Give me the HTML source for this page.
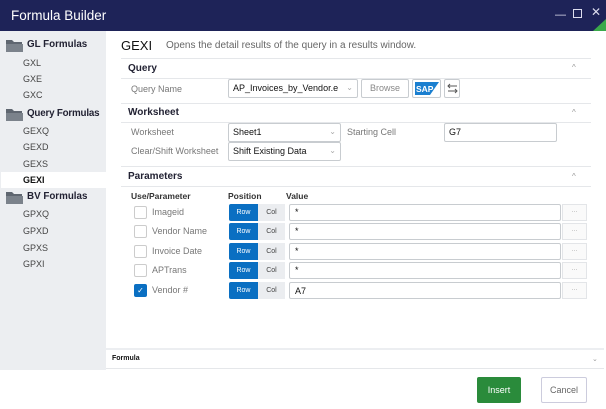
<!DOCTYPE html>
<html><head><style>
*{box-sizing:border-box;margin:0;padding:0}
body{width:606px;height:409px;overflow:hidden;font-family:"Liberation Sans",sans-serif;background:#fff;position:relative;font-size:9px;color:#333}
.a{position:absolute}
.title{left:0;top:0;width:606px;height:31px;background:#1e2358;color:#fff;font-size:13.5px;padding:8px 0 0 11px}
.side{left:0;top:31px;width:106px;height:339px;background:#eceef1}
.grp{font-weight:bold;font-size:9.8px;color:#223;white-space:nowrap}
.it{font-size:9px;color:#444}
.main{left:106px;top:31px;width:498px;height:319px;background:#fff}
.sh{font-size:10px;font-weight:bold;color:#223}
.ln{height:1px;background:#e5e7ea}
.lb{color:#777;font-size:9px}
.inp{border:1px solid #c8ccd0;border-radius:2px;background:#fff;font-size:9px;color:#111;padding:3px 4px}
.car{color:#aaa;font-size:8px}
.cb{width:13px;height:13px;border:1px solid #ccc;border-radius:2px;background:#fff}
.row{background:#0a6fc2;color:#fff;font-size:7px;text-align:center;line-height:17px;width:29px;height:17px;border-radius:2px 0 0 2px}
.col{background:#ebedf0;color:#444;font-size:7px;text-align:center;line-height:17px;width:27px;height:17px}
.dot{border:1px solid #e3e5e8;background:#fafafa;width:25px;height:17px;color:#aaa;font-size:7px;text-align:center;padding-top:2px}
.chev{color:#999;font-size:8px}
</style></head><body>
<div class="a title">Formula Builder</div>
<div class="a" style="left:555px;top:9px;color:#dde;font-size:11px">&#8212;</div>
<div class="a" style="left:573px;top:9px;width:9px;height:9px;border:1px solid #dde"></div>
<div class="a" style="left:591px;top:5px;color:#dde;font-size:12px">✕</div>
<div class="a" style="left:593px;top:19px;width:0;height:0;border-left:13px solid transparent;border-bottom:12px solid #3aa94a"></div>
<div class="a side"></div>
<svg class="a" style="left:6px;top:39px" width="17" height="13"><path d="M0 1h6l2 2h8v10H0z" fill="#5f6670"/><path d="M0 5h17v8H0z" fill="#7b828b"/></svg>
<div class="a grp" style="left:27px;top:39px">GL Formulas</div>
<div class="a it" style="left:23px;top:58px">GXL</div>
<div class="a it" style="left:23px;top:74px">GXE</div>
<div class="a it" style="left:23px;top:90px">GXC</div>
<svg class="a" style="left:6px;top:108px" width="17" height="13"><path d="M0 1h6l2 2h8v10H0z" fill="#5f6670"/><path d="M0 5h17v8H0z" fill="#7b828b"/></svg>
<div class="a grp" style="left:27px;top:108px;letter-spacing:-0.2px">Query Formulas</div>
<div class="a it" style="left:23px;top:126px">GEXQ</div>
<div class="a it" style="left:23px;top:142px">GEXD</div>
<div class="a it" style="left:23px;top:159px">GEXS</div>
<div class="a" style="left:1px;top:172px;width:105px;height:16px;background:#fff"></div>
<div class="a it" style="left:23px;top:175px;color:#111;font-weight:bold">GEXI</div>
<svg class="a" style="left:6px;top:191px" width="17" height="13"><path d="M0 1h6l2 2h8v10H0z" fill="#5f6670"/><path d="M0 5h17v8H0z" fill="#7b828b"/></svg>
<div class="a grp" style="left:27px;top:191px">BV Formulas</div>
<div class="a it" style="left:23px;top:209px">GPXQ</div>
<div class="a it" style="left:23px;top:226px">GPXD</div>
<div class="a it" style="left:23px;top:243px">GPXS</div>
<div class="a it" style="left:23px;top:259px">GPXI</div>

<div class="a main"></div>
<div class="a" style="left:121px;top:38px;font-size:13px;color:#111">GEXI</div>
<div class="a" style="left:166px;top:40px;font-size:10px;color:#666">Opens the detail results of the query in a results window.</div>
<div class="a ln" style="left:121px;top:58px;width:470px"></div>
<div class="a sh" style="left:128px;top:63px">Query</div>
<div class="a chev" style="left:572px;top:63px">^</div>
<div class="a ln" style="left:121px;top:78px;width:470px"></div>
<div class="a lb" style="left:131px;top:84px">Query Name</div>
<div class="a inp" style="left:228px;top:79px;width:130px;height:19px">AP_Invoices_by_Vendor.e<span class="car" style="float:right">⌄</span></div>
<div class="a inp" style="left:361px;top:79px;width:48px;height:19px;color:#888;text-align:center">Browse</div>
<div class="a inp" style="left:412px;top:79px;width:29px;height:19px;padding:2px"><svg width="24" height="13"><path d="M0 0h24l-9 13H0z" fill="#1a7fd0"/><text x="1" y="10" fill="#fff" font-size="8.5" font-weight="bold" font-family="Liberation Sans">SAP</text></svg></div>
<div class="a inp" style="left:444px;top:79px;width:16px;height:19px;padding:3px 2px"><svg width="11" height="11"><path d="M1 3h9M3 1L1 3l2 2M10 8H1M8 6l2 2-2 2" stroke="#555" fill="none"/></svg></div>
<div class="a ln" style="left:121px;top:103px;width:470px"></div>
<div class="a sh" style="left:128px;top:107px">Worksheet</div>
<div class="a chev" style="left:572px;top:108px">^</div>
<div class="a ln" style="left:121px;top:122px;width:470px"></div>
<div class="a lb" style="left:131px;top:127px">Worksheet</div>
<div class="a inp" style="left:228px;top:123px;width:113px;height:19px">Sheet1<span class="car" style="float:right">⌄</span></div>
<div class="a lb" style="left:347px;top:127px">Starting Cell</div>
<div class="a inp" style="left:444px;top:123px;width:113px;height:19px">G7</div>
<div class="a lb" style="left:131px;top:146px">Clear/Shift Worksheet</div>
<div class="a inp" style="left:228px;top:142px;width:113px;height:19px">Shift Existing Data<span class="car" style="float:right">⌄</span></div>
<div class="a ln" style="left:121px;top:166px;width:470px"></div>
<div class="a sh" style="left:128px;top:171px">Parameters</div>
<div class="a chev" style="left:572px;top:172px">^</div>
<div class="a ln" style="left:121px;top:186px;width:470px"></div>
<div class="a" style="left:131px;top:191px;font-weight:bold;font-size:8.5px;color:#333">Use/Parameter</div>
<div class="a" style="left:228px;top:191px;font-weight:bold;font-size:8.5px;color:#333">Position</div>
<div class="a" style="left:286px;top:191px;font-weight:bold;font-size:8.5px;color:#333">Value</div>

<div class="a cb" style="left:134px;top:206px"></div><div class="a lb" style="left:152px;top:207px">Imageid</div>
<div class="a row" style="left:229px;top:204px">Row</div><div class="a col" style="left:258px;top:204px">Col</div>
<div class="a inp" style="left:289px;top:204px;width:272px;height:17px;padding:2px 5px">*</div><div class="a dot" style="left:562px;top:204px">...</div>

<div class="a cb" style="left:134px;top:225px"></div><div class="a lb" style="left:152px;top:226px">Vendor Name</div>
<div class="a row" style="left:229px;top:223px">Row</div><div class="a col" style="left:258px;top:223px">Col</div>
<div class="a inp" style="left:289px;top:223px;width:272px;height:17px;padding:2px 5px">*</div><div class="a dot" style="left:562px;top:223px">...</div>

<div class="a cb" style="left:134px;top:245px"></div><div class="a lb" style="left:152px;top:246px">Invoice Date</div>
<div class="a row" style="left:229px;top:243px">Row</div><div class="a col" style="left:258px;top:243px">Col</div>
<div class="a inp" style="left:289px;top:243px;width:272px;height:17px;padding:2px 5px">*</div><div class="a dot" style="left:562px;top:243px">...</div>

<div class="a cb" style="left:134px;top:264px"></div><div class="a lb" style="left:152px;top:265px">APTrans</div>
<div class="a row" style="left:229px;top:262px">Row</div><div class="a col" style="left:258px;top:262px">Col</div>
<div class="a inp" style="left:289px;top:262px;width:272px;height:17px;padding:2px 5px">*</div><div class="a dot" style="left:562px;top:262px">...</div>

<div class="a cb" style="left:134px;top:284px;background:#0a6fc2;border-color:#0a6fc2;color:#fff;font-size:8px;text-align:center;line-height:11px">✓</div><div class="a lb" style="left:152px;top:285px">Vendor #</div>
<div class="a row" style="left:229px;top:282px">Row</div><div class="a col" style="left:258px;top:282px">Col</div>
<div class="a inp" style="left:289px;top:282px;width:272px;height:17px;padding:3px 5px">A7</div><div class="a dot" style="left:562px;top:282px">...</div>

<div class="a" style="left:106px;top:348px;width:498px;height:2px;background:#eceef1"></div>
<div class="a" style="left:106px;top:350px;width:498px;height:19px;background:#fff;border-bottom:1px solid #e5e7ea"></div>
<div class="a" style="left:112px;top:355px;font-size:7px;font-weight:bold;color:#111">Formula</div>
<div class="a chev" style="left:592px;top:355px;font-size:7px">⌄</div>
<div class="a" style="left:477px;top:377px;width:44px;height:26px;background:#2a8b3b;border-radius:2px;color:#fff;font-size:9px;text-align:center;line-height:26px">Insert</div>
<div class="a" style="left:541px;top:377px;width:46px;height:26px;border:1px solid #ccd;border-radius:2px;color:#666;font-size:9px;text-align:center;line-height:24px">Cancel</div>
</body></html>
